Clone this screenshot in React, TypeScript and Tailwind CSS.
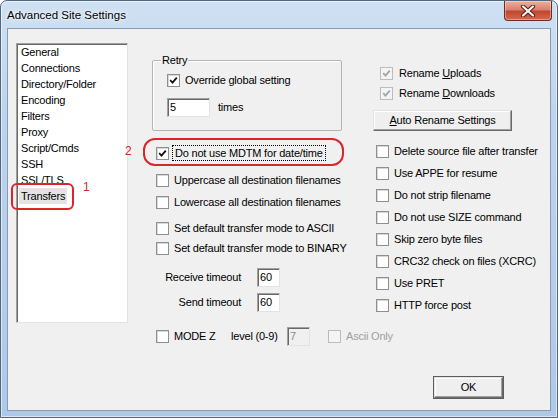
import React from 'react';
import clsx from 'clsx';

function Box({ checked, disabled }: { checked?: boolean; disabled?: boolean }) {
  return (
    <span
      className={clsx(
        'flex h-[13px] w-[13px] shrink-0 items-center justify-center border',
        disabled
          ? 'border-[#bcbcbc] bg-[#f4f4f4]'
          : 'border-[#8e8f8f] bg-white shadow-[inset_1px_1px_0_#d8d8d8]'
      )}
    >
      {checked && (
        <svg width="9" height="9" viewBox="0 0 9 9">
          <path
            d="M1.2 4.2 L3.5 6.6 L7.8 1.6"
            stroke={disabled ? '#a4a4a4' : '#111'}
            strokeWidth="1.8"
            fill="none"
          />
        </svg>
      )}
    </span>
  );
}

function Check({
  label,
  checked,
  disabled,
  className,
}: {
  label: React.ReactNode;
  checked?: boolean;
  disabled?: boolean;
  className?: string;
}) {
  return (
    <div className={clsx('flex h-[13px] shrink-0 items-center gap-[5px] whitespace-nowrap', className)}>
      <Box checked={checked} disabled={disabled} />
      <span className={disabled ? 'text-[#a0a0a0]' : ''}>{label}</span>
    </div>
  );
}

function Field({ value, w, disabled }: { value: string; w: string; disabled?: boolean }) {
  return (
    <div
      className={clsx(
        'flex h-[19px] shrink-0 items-center border border-t-[#a0a0a0] border-l-[#a0a0a0] border-r-[#e3e3e3] border-b-[#e3e3e3] pl-[2px] shadow-[inset_1px_1px_0_#696969]',
        w,
        disabled ? 'bg-[#f0f0f0] text-[#8a8a8a]' : 'bg-white'
      )}
    >
      {value}
    </div>
  );
}

function Button({ children, className }: { children: React.ReactNode; className?: string }) {
  return (
    <div
      className={clsx(
        'flex items-center justify-center border border-t-[#e3e3e3] border-l-[#e3e3e3] border-r-[#696969] border-b-[#696969] bg-[#efefef] shadow-[inset_-1px_-1px_0_#a0a0a0,inset_1px_1px_0_#ffffff]',
        className
      )}
    >
      {children}
    </div>
  );
}

const pages = ['General', 'Connections', 'Directory/Folder', 'Encoding', 'Filters', 'Proxy', 'Script/Cmds', 'SSH', 'SSL/TLS', 'Transfers'];

const rightChecks = [
  'Delete source file after transfer',
  'Use APPE for resume',
  'Do not strip filename',
  'Do not use SIZE command',
  'Skip zero byte files',
  'CRC32 check on files (XCRC)',
  'Use PRET',
  'HTTP force post',
];

export default function App() {
  return (
    <div className="relative h-[418px] w-[558px] overflow-hidden rounded-t-[7px] border border-[#52667f] bg-[linear-gradient(180deg,#cfe0f3_0%,#bcd3ed_30%,#aec8e8_100%)] font-['Liberation_Sans',Arial,sans-serif] text-[11px] leading-[13px] tracking-[-0.2px] text-black shadow-[inset_0_0_0_1px_rgba(255,255,255,0.55)]">
      {/* title bar */}
      <div className="flex h-[27px] items-start">
        <span className="mt-[8px] ml-[6px] text-[11.5px] tracking-normal [text-shadow:0_0_6px_#fff,0_0_3px_#fff]">
          Advanced Site Settings
        </span>
        <div className="mr-[5px] ml-auto flex h-[20px] w-[48px] items-center justify-center rounded-b-[4px] border border-t-0 border-[#6e2b22] bg-[linear-gradient(180deg,#eab0a2_0%,#d9826d_45%,#c4462e_55%,#d26a4f_100%)] shadow-[inset_0_0_0_1px_rgba(255,255,255,0.35)]">
          <svg width="16" height="12" viewBox="0 0 16 12">
            <path d="M3 1.5 L13 10.5 M13 1.5 L3 10.5" stroke="#5a1c14" strokeWidth="4.2" strokeLinecap="round" />
            <path d="M3 1.5 L13 10.5 M13 1.5 L3 10.5" stroke="#ffffff" strokeWidth="2.2" strokeLinecap="round" />
          </svg>
        </div>
      </div>

      {/* client area */}
      <div className="mx-[6px] flex h-[383px] flex-col border border-[#8a9cb4] bg-[#f0f0f0]">
        <div className="flex items-start">
          {/* page list */}
          <div className="mt-[14px] ml-[8px] h-[280px] w-[112px] shrink-0 border border-t-[#a0a0a0] border-l-[#a0a0a0] border-r-[#e3e3e3] border-b-[#e3e3e3] bg-white pl-[1px] shadow-[inset_1px_1px_0_#696969]">
            {pages.map((p) => (
              <div key={p} className="h-[16px]">
                <span className={clsx('ml-[1px] inline-block h-[16px] px-[2px] leading-[16px]', p === 'Transfers' && 'bg-[#e4e4e4]')}>
                  {p}
                </span>
              </div>
            ))}
          </div>

          {/* middle column */}
          <div className="ml-[24px] w-[221px] shrink-0">
            <div className="relative mt-[31px] h-[71px] w-[190px] rounded-[2px] border border-[#b4b4b4] pt-[13px] pl-[14px] shadow-[inset_1px_1px_0_#fff]">
              <span className="absolute -top-[8px] left-[8px] bg-[#f0f0f0] px-[1px] leading-[14px]">Retry</span>
              <Check label="Override global setting" checked />
              <div className="mt-[11px] flex items-center">
                <Field value="5" w="w-[43px]" />
                <span className="ml-[8px]">times</span>
              </div>
            </div>

            <Check
              className="mt-[16px] pl-[4px]"
              checked
              label={<span className="px-[1px] outline-1 outline-offset-[1px] outline-dotted outline-black">Do not use MDTM for date/time</span>}
            />
            <Check className="mt-[14px] pl-[4px]" label="Uppercase all destination filenames" />
            <Check className="mt-[9px] pl-[4px]" label="Lowercase all destination filenames" />
            <Check className="mt-[13px] pl-[4px]" label="Set default transfer mode to ASCII" />
            <Check className="mt-[7px] pl-[4px]" label="Set default transfer mode to BINARY" />

            <div className="mt-[13px] flex h-[19px] items-center">
              <span className="w-[89px] shrink-0 text-right">Receive timeout</span>
              <div className="ml-[16px]">
                <Field value="60" w="w-[23px]" />
              </div>
            </div>
            <div className="mt-[6px] flex h-[19px] items-center">
              <span className="w-[89px] shrink-0 text-right">Send timeout</span>
              <div className="ml-[16px]">
                <Field value="60" w="w-[23px]" />
              </div>
            </div>

            <div className="mt-[15px] flex h-[19px] items-center pl-[4px]">
              <Check className="w-[75px]" label="MODE Z" />
              <span className="w-[56px] shrink-0 whitespace-nowrap">level (0-9)</span>
              <Field value="7" w="w-[23px]" disabled />
              <Check className="ml-[18px]" label="Ascii Only" disabled />
            </div>
          </div>

          {/* right column */}
          <div className="w-[167px] shrink-0">
            <Check className="mt-[38px] gap-[6px] pl-[7px]" checked disabled label={<span className="text-black">Rename <u>U</u>ploads</span>} />
            <Check className="mt-[7px] gap-[6px] pl-[7px]" checked disabled label={<span className="text-black">Rename <u>D</u>ownloads</span>} />
            <Button className="mt-[10px] h-[21px] w-[139px]">
              <span>
                <u>A</u>uto Rename Settings
              </span>
            </Button>
            <div className="mt-[9px]">
              {rightChecks.map((c) => (
                <div key={c} className="flex h-[22px] items-center pl-[3px]">
                  <Check label={c} />
                </div>
              ))}
            </div>
          </div>
        </div>

        <div className="mt-auto flex justify-end pr-[47px] pb-[12px]">
          <Button className="h-[21px] w-[69px] outline outline-[#5d5d5d]">OK</Button>
        </div>
      </div>

      {/* red annotations */}
      <div className="pointer-events-none absolute top-[182px] left-[10px] h-[27px] w-[63px] rounded-[6px] border-2 border-[#d8262c]" />
      <span className="absolute top-[180px] left-[82px] text-[12px] tracking-normal text-[#d8262c]">1</span>
      <div className="pointer-events-none absolute top-[137px] left-[142px] h-[28px] w-[201px] rounded-[12px] border-2 border-[#d8262c]" />
      <span className="absolute top-[144px] left-[124px] text-[12px] tracking-normal text-[#d8262c]">2</span>
    </div>
  );
}
